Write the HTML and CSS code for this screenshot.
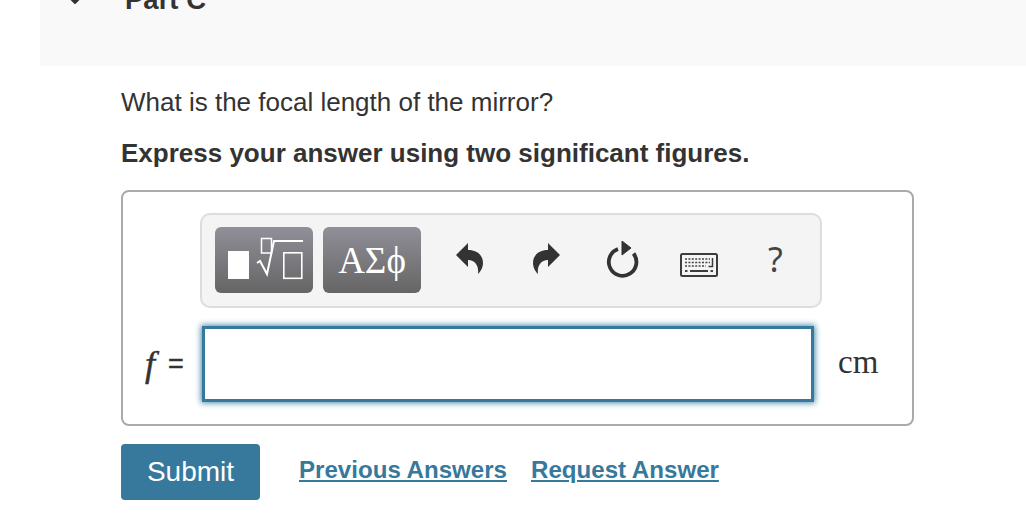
FILE: index.html
```html
<!DOCTYPE html>
<html lang="en">
<head>
<meta charset="utf-8">
<title>Part C</title>
<link rel="stylesheet" href="styles.css">
</head>
<body>
<header class="part-head">
  <svg class="chevron" viewBox="0 0 16 8" width="16" height="8"><path d="M3 0 L8 5 L13 0 Z" fill="#333" stroke="#333" stroke-width="2" stroke-linejoin="round"/></svg>
  <h2 class="part-title">Part C</h2>
</header>
<main class="content">
  <p class="question">What is the focal length of the mirror?</p>
  <p class="instruction">Express your answer using two significant figures.</p>
  <section class="answer-box">
    <div class="toolbar">
      <button class="tool-btn" aria-label="templates">
        <svg viewBox="0 0 98 66" width="98" height="66">
          <rect x="13" y="24" width="21" height="28" fill="#fff"/>
          <rect x="46.500" y="11.500" width="10" height="14.500" fill="none" stroke="#fff" stroke-width="1.500"/>
          <path d="M42 36 L45 34 L52 47 L59 14 L88 14" fill="none" stroke="#fff" stroke-width="2"/>
          <rect x="68.800" y="25.800" width="18" height="25.500" fill="none" stroke="#fff" stroke-width="1.600"/>
        </svg>
      </button>
      <button class="tool-btn tool-greek">ΑΣϕ</button>
      <div class="tool-icons">
        <span class="icon-slot"><svg viewBox="0 0 30 34" width="30" height="34"><path d="M3 12 L15 0 V7 C25 7 30 13 30 20 C30 25 27 29 25 31 C26 24 23 17 15 17 V24 Z" fill="#333"/></svg></span>
        <span class="icon-slot"><svg viewBox="0 0 30 34" width="30" height="34"><path d="M30 12 L18 0 V7 C8 7 3 13 3 20 C3 25 6 29 8 31 C7 24 10 17 18 17 V24 Z" fill="#333"/></svg></span>
        <span class="icon-slot"><svg viewBox="0 0 36 38" width="36" height="38"><path d="M14 8 A13.800 13.800 0 1 0 29.500 12.500" fill="none" stroke="#333" stroke-width="3.800"/><path d="M18 0 L27 7 L18 14 Z" fill="#333" stroke="#333" stroke-linejoin="round"/></svg></span>
        <span class="icon-slot keyboard"><svg viewBox="0 0 40 26" width="40" height="26"><rect x="2" y="2" width="36" height="22" rx="1.500" fill="none" stroke="#3c3c3c" stroke-width="2"/><path d="M6 7h25M6 10.500h25M6 14h21" stroke="#444" stroke-width="1.700" stroke-dasharray="2 1.400"/><path d="M33.500 6v8.500h-4" fill="none" stroke="#3c3c3c" stroke-width="1.500"/><path d="M11 19h18" stroke="#3c3c3c" stroke-width="2"/><path d="M6 19h2.500M31.500 19h2.500" stroke="#444" stroke-width="2"/></svg></span>
        <span class="icon-slot help">?</span>
      </div>
    </div>
    <div class="answer-row">
      <span class="var"><i class="var-name">f</i><span class="eq">=</span></span>
      <input class="answer-input" type="text" aria-label="f">
      <span class="unit">cm</span>
    </div>
  </section>
  <div class="actions">
    <button class="submit">Submit</button>
    <a class="link" href="#">Previous Answers</a>
    <a class="link" href="#">Request Answer</a>
  </div>
</main>
</body>
</html>
```

FILE: styles.css
```css
* { box-sizing: border-box; }
html, body { margin: 0; padding: 0; height: 516px; overflow: hidden; background: #fff; }
body { font-family: "Liberation Sans", Arial, sans-serif; color: #333; }

.part-head {
  height: 66px;
  margin-left: 40px;
  background: #f9f9f9;
  display: flex;
  align-items: flex-start;
  overflow: hidden;
}
.chevron { flex: none; margin: -2px 0 0 27px; }
.part-title {
  margin: -16px 0 0 42px;
  font-size: 27.500px;
  line-height: 31px;
  font-weight: bold;
}

.content { padding: 0 112px 0 121px; }
.question { margin: 20px 0 0; font-size: 26px; line-height: 32px; }
.instruction { margin: 19px 0 0; font-size: 26px; line-height: 32px; font-weight: bold; }

.answer-box {
  margin-top: 21px;
  height: 236px;
  border: 2px solid #aaa;
  border-radius: 8px;
  padding: 21px 0 0 77px;
}
.toolbar {
  width: 622px;
  height: 95px;
  background: #f4f4f4;
  border: 2px solid #ddd;
  border-radius: 10px;
  padding: 12px 0 0 13px;
  display: flex;
  align-items: flex-start;
  gap: 10px;
}
.tool-btn {
  flex: none;
  width: 98px;
  height: 66px;
  padding: 0;
  border: 0;
  border-radius: 6px;
  background: linear-gradient(#918f98, #656565);
  display: block;
}
.tool-btn svg { display: block; }
.tool-greek {
  color: #fff;
  font-family: "Liberation Serif", serif;
  font-size: 37px;
}
.tool-icons { flex: none; display: flex; margin-left: -2px; height: 66px; }
.icon-slot {
  width: 77px;
  display: flex;
  align-items: center;
  justify-content: center;
}
.keyboard { padding-top: 9px; }
.help { font-family: "Noto Sans", sans-serif; font-size: 34px; color: #444; padding-bottom: 2px; }

.answer-row {
  display: flex;
  align-items: center;
  margin: 18px 0 0 -77px;
  height: 76px;
}
.var {
  width: 79px;
  padding-left: 22px;
  font-family: "Liberation Serif", serif;
  display: flex;
  align-items: center;
  gap: 9px;
}
.var-name { font-size: 36px; -webkit-text-stroke: 0.500px #333; padding-right: 4px; }
.eq { font-family: "Liberation Sans", sans-serif; font-size: 27px; -webkit-text-stroke: 0.400px #333; }
.answer-input {
  width: 612px;
  height: 76px;
  border: 3px solid #36799c;
  background: #fff;
  box-shadow: 0 0 6px 1px #4a88a8;
  outline: 0;
  padding: 0;
}
.unit {
  margin-left: 24px;
  padding-bottom: 3px;
  font-family: "Liberation Serif", serif;
  font-size: 33px;
}

.actions { display: flex; align-items: center; margin-top: 18px; }
.submit {
  width: 139px;
  height: 56px;
  border: 0;
  border-radius: 4px;
  background: #36799c;
  color: #fff;
  font-family: "Liberation Sans", sans-serif;
  font-size: 28px;
  padding: 0;
  margin-right: 39px;
}
.link {
  color: #36799c;
  font-size: 24.100px;
  font-weight: bold;
  margin-right: 24px;
  margin-top: -5px;
}
```
